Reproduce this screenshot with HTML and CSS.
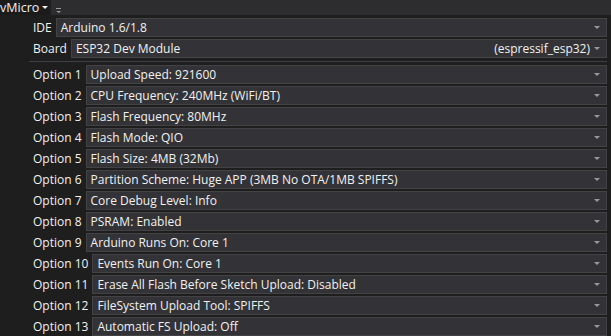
FILE: index.html
```html
<!DOCTYPE html>
<html lang="en">
<head>
  <meta charset="UTF-8">
  <title>vMicro Board Options</title>
  <link rel="stylesheet" href="styles.css">
</head>
<body>
  <div class="toolbar">
    <div class="menu">vMicro <span class="caret"></span></div>
    <div class="strip"><span class="overflow"></span></div>
  </div>

  <div class="panel">
    <div class="row">
      <span class="label">IDE</span>
      <div class="combo"><span class="value">Arduino 1.6/1.8</span><span class="arrow"></span></div>
    </div>
    <div class="row">
      <span class="label">Board</span>
      <div class="combo"><span class="value">ESP32 Dev Module</span><span class="extra">(espressif_esp32)</span><span class="arrow"></span></div>
    </div>

    <div class="separator"></div>

    <div id="options">
      <!-- option rows are inserted here -->
    </div>
  </div>

  <script>
    // Board options as listed by the vMicro board properties
    const options = [
      "Upload Speed: 921600",
      "CPU Frequency: 240MHz (WiFi/BT)",
      "Flash Frequency: 80MHz",
      "Flash Mode: QIO",
      "Flash Size: 4MB (32Mb)",
      "Partition Scheme: Huge APP (3MB No OTA/1MB SPIFFS)",
      "Core Debug Level: Info",
      "PSRAM: Enabled",
      "Arduino Runs On: Core 1",
      "Events Run On: Core 1",
      "Erase All Flash Before Sketch Upload: Disabled",
      "FileSystem Upload Tool: SPIFFS",
      "Automatic FS Upload: Off"
    ];

    const list = document.getElementById("options");
    options.forEach((text, i) => {
      const row = document.createElement("div");
      row.className = "row";
      row.innerHTML = `
        <span class="label">Option ${i + 1}</span>
        <div class="combo"><span class="value">${text}</span><span class="arrow"></span></div>
      `;
      list.appendChild(row);
    });
  </script>
</body>
</html>
```

FILE: styles.css
```css
:root {
  --panel-bg: #1e1e1e;
  --bar-bg: #2d2d30;
  --combo-bg: #333337;
  --combo-border: #434346;
  --text: #f1f1f1;
  --arrow: #999999;
}
body {
  margin: 0;
  background: var(--panel-bg);
  color: var(--text);
  font-family: 'Open Sans', sans-serif;
  font-size: 12px;
  overflow: hidden;
}
.toolbar {
  display: flex;
  height: 15px;
}
.menu {
  display: flex;
  align-items: center;
  gap: 3px;
  padding: 0 2px 0 0;
  width: 47px;
  line-height: 14px;
  font-size: 12.5px;
  background: #1b1b1c;
}
.caret {
  width: 0;
  height: 0;
  border-left: 3px solid transparent;
  border-right: 3px solid transparent;
  border-top: 3px solid var(--text);
}
.strip {
  flex: 1;
  margin-left: 2px;
  background: var(--bar-bg);
  position: relative;
}
.overflow {
  position: absolute;
  left: 5px;
  top: 8px;
  width: 5px;
  height: 1px;
  background: #999;
}
.overflow::after {
  content: "";
  position: absolute;
  left: 0;
  top: 3px;
  border-left: 3px solid transparent;
  border-right: 2px solid transparent;
  border-top: 2px solid #999;
  width: 0;
}
.panel {
  padding: 2px 4px 0 33px;
}
.row {
  display: flex;
  align-items: center;
  gap: 4px;
  height: 21px;
}
.label {
  white-space: nowrap;
}
.combo {
  flex: 1;
  display: flex;
  align-items: center;
  height: 17px;
  background: var(--combo-bg);
  border: 1px solid var(--combo-border);
  padding: 0 6px 0 4px;
  white-space: nowrap;
}
.value {
  flex: 1;
}
.extra {
  margin-right: 4px;
}
.arrow {
  width: 0;
  height: 0;
  border-left: 3px solid transparent;
  border-right: 3px solid transparent;
  border-top: 3px solid var(--arrow);
}
.separator {
  height: 1px;
  background: #3f3f46;
  margin: 2px 0 2px -4px;
}
```
